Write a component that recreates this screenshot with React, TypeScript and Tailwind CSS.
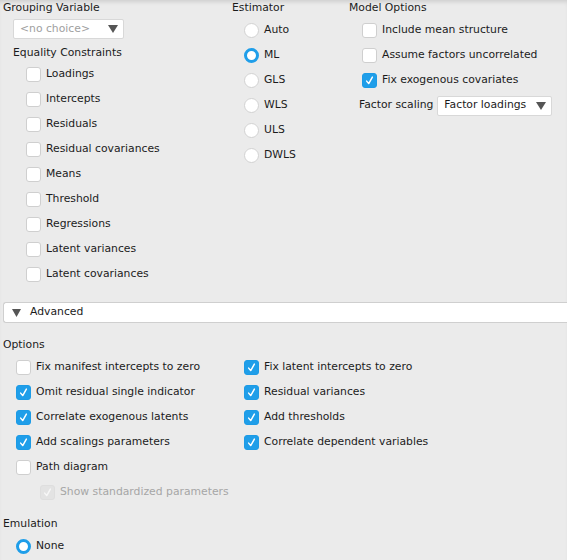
import { type ReactNode } from 'react'
import clsx from 'clsx'

const Check = ({ disabled }: { disabled?: boolean }) => (
  <svg viewBox="0 0 15 15" className="h-[15px] w-[15px]">
    <path
      d="M4.2 8.2 L6.6 11 L10.8 3.6"
      fill="none"
      stroke={disabled ? '#f7f7f7' : '#ffffff'}
      strokeWidth="1.7"
      strokeLinecap="round"
      strokeLinejoin="round"
    />
  </svg>
)

type CheckboxProps = {
  label: string
  checked?: boolean
  disabled?: boolean
  className?: string
}

const Checkbox = ({ label, checked, disabled, className }: CheckboxProps) => (
  <div className={clsx('flex h-[25px] items-center gap-[5px]', className)}>
    <span
      className={clsx(
        'flex h-[15px] w-[15px] shrink-0 items-center justify-center rounded-[3px] border',
        disabled
          ? 'border-[#dedede] bg-[#e3e3e3]'
          : checked
            ? 'border-[#1c9be6] bg-[#1f9ee9]'
            : 'border-[#cfcfcf] bg-white',
      )}
    >
      {checked && <Check disabled={disabled} />}
    </span>
    <span className={clsx('whitespace-nowrap', disabled ? 'text-[#a6a6a6]' : 'text-[#1b1b1b]')}>
      {label}
    </span>
  </div>
)

const Radio = ({ label, checked, className }: { label: string; checked?: boolean; className?: string }) => (
  <div className={clsx('flex h-[25px] items-center gap-[5px]', className)}>
    <span
      className={clsx(
        'h-[15px] w-[15px] shrink-0 rounded-full bg-white',
        checked ? 'border-[3.5px] border-[#1f9ee9]' : 'border border-[#d2d2d2]',
      )}
    />
    <span className="whitespace-nowrap text-[#1b1b1b]">{label}</span>
  </div>
)

const Heading = ({ children, className }: { children: ReactNode; className?: string }) => (
  <div className={clsx('h-[16px] leading-[16px] whitespace-nowrap text-[#1b1b1b]', className)}>{children}</div>
)

const DropArrow = () => (
  <svg viewBox="0 0 10 8" className="h-[8px] w-[10px]">
    <polygon points="0,0 10,0 5,8" fill="#555555" />
  </svg>
)

const Dropdown = ({ value, placeholder, className }: { value: string; placeholder?: boolean; className?: string }) => (
  <div
    className={clsx(
      'flex h-[20px] items-center justify-between rounded-[2px] border border-[#d8d8d8] bg-white pl-[6px] pr-[5px]',
      className,
    )}
  >
    <span className={placeholder ? 'text-[#a0a0a0]' : 'text-[#1b1b1b]'}>{value}</span>
    <DropArrow />
  </div>
)

const equalityItems = [
  'Loadings',
  'Intercepts',
  'Residuals',
  'Residual covariances',
  'Means',
  'Threshold',
  'Regressions',
  'Latent variances',
  'Latent covariances',
]

const estimators = ['Auto', 'ML', 'GLS', 'WLS', 'ULS', 'DWLS']

const App = () => {
  return (
    <div
      className="min-h-screen overflow-hidden bg-[#ebebeb] text-[10.8px] shadow-[inset_0_4px_4px_-2px_rgba(0,0,0,0.12)]"
      style={{ fontFamily: '"DejaVu Sans", Verdana, sans-serif' }}
    >
      <div className="flex">
        <div className="w-[232px] pl-[3px]">
          <Heading>Grouping Variable</Heading>
          <Dropdown value="<no choice>" placeholder className="mt-[3px] ml-[10px] w-[111px]" />
          <Heading className="mt-[6px] ml-[10px]">Equality Constraints</Heading>
          <div className="mt-[1px] ml-[23px]">
            {equalityItems.map((item) => (
              <Checkbox key={item} label={item} />
            ))}
          </div>
        </div>

        <div className="w-[117px]">
          <Heading>Estimator</Heading>
          <div className="mt-[2px] ml-[12px]">
            {estimators.map((e) => (
              <Radio key={e} label={e} checked={e === 'ML'} />
            ))}
          </div>
        </div>

        <div className="flex-1">
          <Heading>Model Options</Heading>
          <div className="mt-[2px] ml-[13px]">
            <Checkbox label="Include mean structure" />
            <Checkbox label="Assume factors uncorrelated" />
            <Checkbox label="Fix exogenous covariates" checked />
          </div>
          <div className="ml-[10px] flex h-[25px] items-center gap-[4px]">
            <span className="whitespace-nowrap text-[#1b1b1b]">Factor scaling</span>
            <Dropdown value="Factor loadings" className="w-[115px]" />
          </div>
        </div>
      </div>

      <div className="mt-[15px] ml-[3px] flex h-[21px] items-center gap-[9px] rounded-l-[3px] border border-r-0 border-[#cfcfcf] bg-white pl-[8px]">
        <svg viewBox="0 0 9 8" className="h-[8px] w-[9px]">
          <polygon points="0,0 9,0 4.5,8" fill="#555555" />
        </svg>
        <span className="text-[#1b1b1b]">Advanced</span>
      </div>

      <Heading className="mt-[14px] pl-[3px]">Options</Heading>
      <div className="mt-[2px] grid grid-cols-[228px_1fr] pl-[16px]">
        <div>
          <Checkbox label="Fix manifest intercepts to zero" />
          <Checkbox label="Omit residual single indicator" checked />
          <Checkbox label="Correlate exogenous latents" checked />
          <Checkbox label="Add scalings parameters" checked />
          <Checkbox label="Path diagram" />
          <Checkbox label="Show standardized parameters" checked disabled className="ml-[24px] gap-[4px]" />
        </div>
        <div>
          <Checkbox label="Fix latent intercepts to zero" checked />
          <Checkbox label="Residual variances" checked />
          <Checkbox label="Add thresholds" checked />
          <Checkbox label="Correlate dependent variables" checked />
        </div>
      </div>

      <Heading className="mt-[11px] pl-[3px]">Emulation</Heading>
      <Radio label="None" checked className="mt-[2px] ml-[16px] gap-[4px]" />
    </div>
  )
}

export default App
